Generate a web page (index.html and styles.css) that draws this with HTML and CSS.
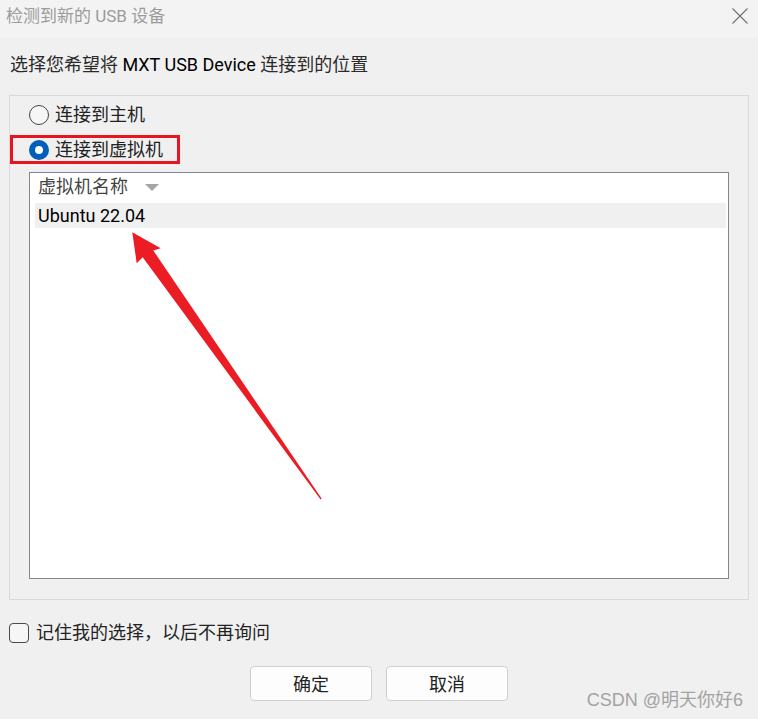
FILE: index.html
```html
<!DOCTYPE html>
<html lang="zh-CN">
<head>
<meta charset="utf-8">
<title>检测到新的 USB 设备</title>
<link rel="stylesheet" href="styles.css">
</head>
<body>
<div class="dialog">
  <div class="titlebar">
    <span class="title">检测到新的 USB 设备</span>
    <button class="close" aria-label="关闭">
      <svg width="16" height="16" viewBox="0 0 16 16"><path d="M0.5 0.5 L15.5 15.5 M15.5 0.5 L0.5 15.5" stroke="#6f6f6f" stroke-width="1.1" fill="none"/></svg>
    </button>
  </div>
  <div class="body">
    <p class="prompt">选择您希望将 <span class="latin">MXT USB Device</span> 连接到的位置</p>
    <div class="group">
      <label class="radio-row">
        <span class="radio"></span>
        <span>连接到主机</span>
      </label>
      <label class="radio-row highlight">
        <span class="radio checked"></span>
        <span>连接到虚拟机</span>
      </label>
      <div class="list">
        <div class="list-header">
          <span>虚拟机名称</span>
          <span class="sort"></span>
        </div>
        <div class="list-row selected"><span class="latin">Ubuntu 22.04</span></div>
      </div>
    </div>
    <label class="check-row">
      <span class="checkbox"></span>
      <span>记住我的选择，以后不再询问</span>
    </label>
    <div class="buttons">
      <button class="btn">确定</button>
      <button class="btn">取消</button>
    </div>
  </div>
  <svg class="arrow" width="758" height="719" viewBox="0 0 758 719">
    <polygon points="132.3,232.3 160.7,248.3 153.3,250.5 321.6,498.6 320.6,499.6 142.7,257.3 136.7,263.3" fill="#ec1c24"/>
  </svg>
  <div class="watermark">CSDN @明天你好6</div>
</div>
</body>
</html>
```
FILE: styles.css
```css
* { box-sizing: border-box; }
html, body { margin: 0; padding: 0; }
body {
  background: #f0f0f0;
  font-family: Roboto, "Noto Sans CJK SC", sans-serif;
  font-size: 18px;
  color: #1a1a1a;
}
.dialog {
  position: relative;
  width: 758px;
  height: 719px;
  overflow: hidden;
  background: #f0f0f0;
}
.titlebar {
  height: 37px;
  background: #f3f3f3;
  display: flex;
  justify-content: space-between;
  align-items: flex-start;
  padding: 4px 10px 0 6px;
}
.title {
  font-size: 17px;
  line-height: 24px;
  color: #9b9b9b;
}
.close {
  margin-top: 4px;
  padding: 0;
  border: 0;
  background: none;
  width: 16px;
  height: 16px;
  display: flex;
}
.body { padding: 0; }
.prompt {
  margin: 16px 0 18px 10px;
  line-height: 24px;
  color: #2a2a2a;
}
.latin { color: #000; }
.group {
  margin: 0 9px;
  height: 505px;
  border: 1px solid #d9d9d9;
  padding: 7px 0 0 0;
  display: flex;
  flex-direction: column;
  align-items: flex-start;
}
.radio-row {
  display: flex;
  align-items: center;
  gap: 6px;
  line-height: 24px;
  padding-left: 19px;
  color: #222;
}
.radio-row.highlight {
  margin-top: 8px;
  border: 3px solid #e8141f;
  padding: 0 14px 0 16px;
  height: 29px;
}
.radio {
  width: 20px;
  height: 20px;
  border-radius: 50%;
  border: 1px solid #444;
  background: #f6f6f6;
  display: inline-flex;
  align-items: center;
  justify-content: center;
}
.radio.checked {
  border: 0;
  background: #005fb8;
}
.radio.checked::after {
  content: "";
  width: 8px;
  height: 8px;
  border-radius: 50%;
  background: #fff;
}
.list {
  align-self: stretch;
  margin: 8px 19px 0 19px;
  height: 407px;
  border: 1px solid #82878f;
  background: #fff;
  display: flex;
  flex-direction: column;
}
.list-header {
  height: 30px;
  display: flex;
  align-items: center;
  gap: 17px;
  padding: 0 0 2px 8px;
  color: #444;
  line-height: 24px;
}
.sort {
  width: 0;
  height: 0;
  border-left: 7px solid transparent;
  border-right: 7px solid transparent;
  border-top: 7px solid #a5a5a5;
}
.list-row {
  height: 25px;
  margin: 0 2px 0 5px;
  padding-left: 3px;
  display: flex;
  align-items: center;
  line-height: 24px;
}
.list-row.selected { background: #f0f0f0; }
.check-row {
  display: flex;
  align-items: center;
  gap: 7px;
  margin: 21px 0 0 9px;
  line-height: 24px;
  color: #222;
}
.checkbox {
  width: 20px;
  height: 20px;
  border: 1px solid #4a4a4a;
  border-radius: 4px;
  background: #f6f6f6;
}
.buttons {
  display: flex;
  justify-content: center;
  gap: 14px;
  margin-top: 21px;
}
.btn {
  width: 122px;
  height: 35px;
  border: 1px solid #cfcfcf;
  border-radius: 4px;
  background: #fdfdfd;
  font-family: inherit;
  font-size: 18px;
  color: #222;
  padding: 0 0 1px;
}
.arrow {
  position: absolute;
  left: 0;
  top: 0;
  pointer-events: none;
}
.watermark {
  position: absolute;
  right: 15px;
  top: 688px;
  font-size: 18px;
  line-height: 24px;
  color: #a3a3a3;
  font-family: "Liberation Sans", "Noto Sans CJK SC", sans-serif;
}
```
